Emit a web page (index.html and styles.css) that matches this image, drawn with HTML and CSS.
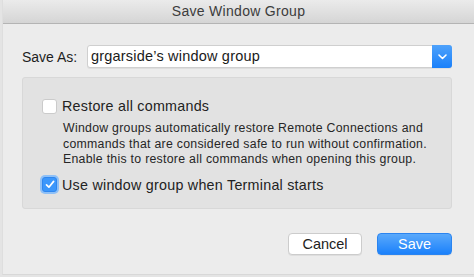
FILE: index.html
```html
<!DOCTYPE html>
<html lang="en">
<head>
    <meta charset="UTF-8">
    <title>Save Window Group</title>
    <link rel="stylesheet" href="styles.css">
</head>
<body>
    <div class="window">
        <!-- 标题栏 -->
        <div class="titlebar">Save Window Group</div>

        <div class="content">
            <!-- 名称输入 -->
            <div class="row">
                <label class="label">Save As:</label>
                <div class="combo">
                    <div class="combo-text">grgarside’s window group</div>
                    <div class="combo-btn">
                        <svg width="9" height="6" viewBox="0 0 9 6"><path d="M1 1 L4.5 4.5 L8 1" fill="none" stroke="#fff" stroke-width="1.6" stroke-linecap="round" stroke-linejoin="round"/></svg>
                    </div>
                </div>
            </div>

            <!-- 选项框 -->
            <div class="group">
                <div class="check-row">
                    <span class="check"></span>
                    <span class="check-label">Restore all commands</span>
                </div>
                <p class="desc">Window groups automatically restore Remote Connections and<br>commands that are considered safe to run without confirmation.<br>Enable this to restore all commands when opening this group.</p>
                <div class="check-row second">
                    <span class="check on">
                        <svg width="10" height="9" viewBox="0 0 10 9"><path d="M1.5 4.8 L3.9 7.2 L8.6 1.4" fill="none" stroke="#fff" stroke-width="1.7" stroke-linecap="round" stroke-linejoin="round"/></svg>
                    </span>
                    <span class="check-label">Use window group when Terminal starts</span>
                </div>
            </div>

            <!-- 按钮 -->
            <div class="buttons">
                <a href="javascript:;" class="btn">Cancel</a>
                <a href="javascript:;" class="btn primary">Save</a>
            </div>
        </div>
    </div>
</body>
</html>
```

FILE: styles.css
```css
*{
    margin: 0;
    padding: 0;
    box-sizing: border-box;
}
body{
    width: 474px;
    height: 277px;
    background: #e4e4e4;
    font-family: "Liberation Sans", Arial, sans-serif;
    color: #222;
    overflow: hidden;
}
.window{
    margin-left: 2px;
    width: 472px;
    height: 275px;
    background: #ececec;
    border-left: 1px solid #dedede;
    border-bottom: 1px solid #d8d8d8;
}
.titlebar{
    height: 24px;
    line-height: 23px;
    text-align: center;
    font-size: 14px;
    letter-spacing: 0.3px;
    color: #3c3c3c;
    background: linear-gradient(#ebebeb, #d5d5d5);
    border-bottom: 1px solid #b4b4b4;
}
.content{
    padding: 21px 0 0 19px;
}
/* Save As 一行 */
.row{
    display: flex;
    align-items: center;
    height: 23px;
}
.label{
    width: 65px;
    font-size: 14px;
    color: #1e1e1e;
}
.combo{
    display: flex;
    width: 365px;
    height: 23px;
    background: #fff;
    border: 1px solid #cfcfcf;
    border-radius: 3px;
    box-shadow: 0 1px 0 rgba(0,0,0,0.06);
}
.combo-text{
    flex: 1;
    padding-left: 3px;
    line-height: 21px;
    font-size: 14.5px;
    letter-spacing: 0.2px;
    color: #1a1a1a;
}
.combo-btn{
    width: 20px;
    margin: -1px -1px -1px 0;
    display: flex;
    align-items: center;
    justify-content: center;
    background: linear-gradient(#4ea2fb, #1a80fa);
    border-radius: 0 3px 3px 0;
}
/* 灰色框 */
.group{
    margin-top: 9px;
    width: 430px;
    height: 132px;
    background: #e2e2e2;
    border: 1px solid #d8d8d8;
    border-radius: 3px;
    padding: 20px 0 0 19px;
}
.check-row{
    display: flex;
    align-items: center;
    height: 16px;
}
.check{
    width: 15px;
    height: 15px;
    background: #fff;
    border: 1px solid #cbcbcb;
    border-radius: 3px;
    display: flex;
    align-items: center;
    justify-content: center;
}
.check.on{
    background: #3c97fb;
    border-color: #2f86ee;
    box-shadow: 0 0 0 2px #8ec0f7;
}
.check-label{
    margin-left: 5px;
    font-size: 14.3px;
    letter-spacing: 0.25px;
    color: #222;
}
.desc{
    margin: 7px 0 0 21px;
    white-space: nowrap;
    font-size: 12.3px;
    letter-spacing: 0.28px;
    line-height: 15.5px;
    color: #262626;
}
.second{
    margin-top: 9px;
}
/* 底部按钮 */
.buttons{
    display: flex;
    justify-content: flex-end;
    gap: 15px;
    margin-top: 24px;
    width: 430px;
}
.btn{
    display: block;
    width: 74px;
    height: 22px;
    line-height: 20px;
    text-align: center;
    font-size: 14.5px;
    text-decoration: none;
    color: #222;
    background: #fff;
    border: 1px solid #cccccc;
    border-radius: 4px;
    box-shadow: 0 1px 0 rgba(0,0,0,0.06);
}
.btn.primary{
    width: 75px;
    color: #fff;
    background: linear-gradient(#5aa9fb, #1b81fb);
    border-color: #2a84f0;
}
```
